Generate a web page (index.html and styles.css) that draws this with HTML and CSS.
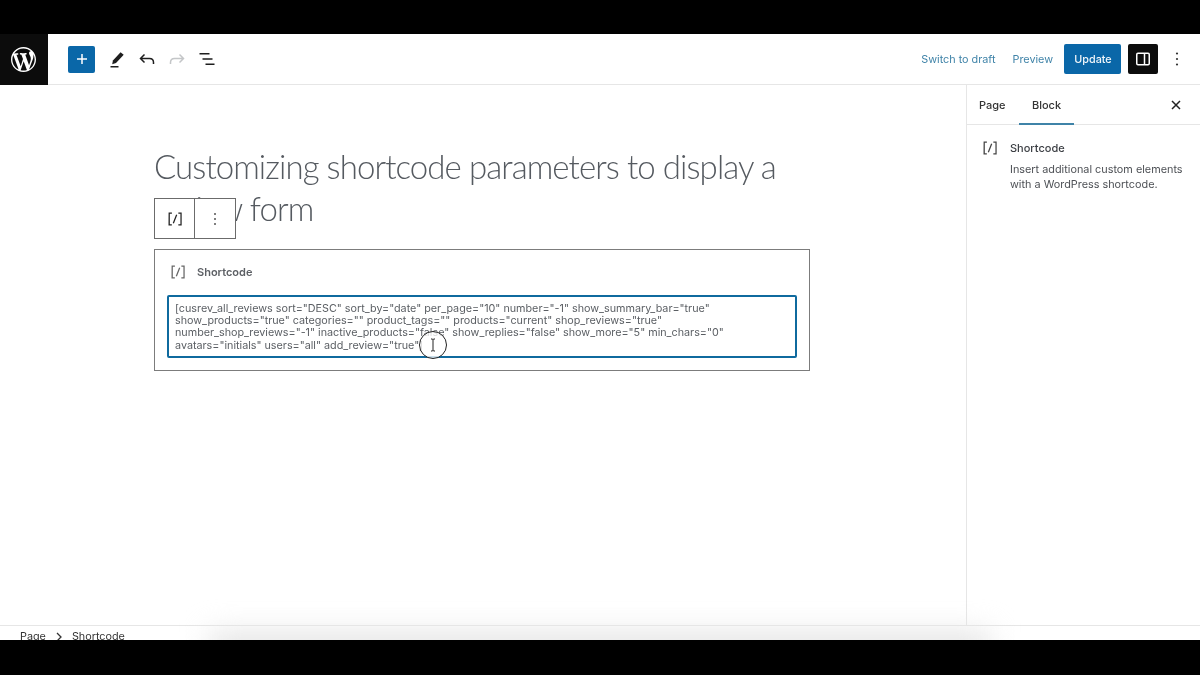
FILE: index.html
```html
<!DOCTYPE html>
<html lang="en">
<head>
<meta charset="utf-8">
<title>Edit Page</title>
<link rel="stylesheet" href="styles.css">
</head>
<body>
<div class="band-top"></div>
<div class="app">
  <header class="topbar">
    <div class="wp-logo">
      <svg width="25" height="25" viewBox="0 0 20 20"><path fill="#fff" fill-rule="evenodd" d="M20 10c0-5.51-4.49-10-10-10C4.48 0 0 4.49 0 10c0 5.52 4.48 10 10 10 5.51 0 10-4.48 10-10zM7.78 15.37L4.37 6.22c.55-.02 1.17-.08 1.17-.08.5-.06.44-1.13-.06-1.11 0 0-1.45.11-2.37.11-.18 0-.37 0-.58-.01C4.12 2.69 6.87 1.11 10 1.11c2.33 0 4.45.87 6.05 2.34-.68-.11-1.65.39-1.65 1.58 0 .74.45 1.36.9 2.1.35.61.55 1.36.55 2.46 0 1.49-1.4 5-1.4 5l-3.03-8.37c.54-.02.82-.17.82-.17.5-.05.44-1.25-.06-1.22 0 0-1.44.12-2.38.12-.87 0-2.33-.12-2.33-.12-.5-.03-.56 1.2-.06 1.22l.92.08 1.26 3.41zM17.41 10c.24-.64.74-1.87.43-4.25.7 1.29 1.05 2.71 1.05 4.25 0 3.29-1.73 6.24-4.4 7.78.97-2.59 1.94-5.2 2.92-7.78zM6.1 18.09C3.12 16.65 1.11 13.53 1.11 10c0-1.3.23-2.48.72-3.59C3.25 10.3 4.67 14.2 6.1 18.09zm4.03-6.63l2.58 6.98c-.86.29-1.76.45-2.71.45-.79 0-1.57-.11-2.29-.33.81-2.38 1.62-4.74 2.42-7.1z"/></svg>
    </div>
    <div class="tools">
      <button class="add-btn" aria-label="Add block"><svg width="14" height="14" viewBox="0 0 14 14"><path d="M7 2v10M2 7h10" stroke="#fff" stroke-width="1.5" fill="none"/></svg></button>
      <svg class="tool pencil" width="24" height="24" viewBox="0 0 24 24"><path fill="#1e1e1e" d="M15.6 5.3 18.7 7.8 11 16l-3.8 1.2.7-3.8z"/><path fill="#1e1e1e" d="M5.5 19h8v1.5h-8z"/></svg>
      <svg class="tool" width="24" height="24" viewBox="0 0 24 24"><path fill="none" stroke="#1e1e1e" stroke-width="1.5" d="M9.5 7.5 5.5 11.5l4 4M5.5 11.5h9c2.5 0 4 1.5 4 4v1.5"/></svg>
      <svg class="tool" width="24" height="24" viewBox="0 0 24 24"><path fill="none" stroke="#c4c6c8" stroke-width="1.5" d="M14.5 7.5l4 4-4 4M18.5 11.5h-9c-2.5 0-4 1.5-4 4v1.5"/></svg>
      <svg class="tool" width="24" height="24" viewBox="0 0 24 24"><path fill="#1e1e1e" d="M4.5 6h10v1.5h-10zM7.5 11.2h10v1.5h-10zM10.5 16.5h9V18h-9z"/></svg>
    </div>
    <div class="actions">
      <a class="link link-draft">Switch to draft</a>
      <a class="link link-preview">Preview</a>
      <button class="update">Update</button>
      <button class="panel-btn" aria-label="Settings"><svg width="16" height="16" viewBox="0 0 16 16"><rect x="1.75" y="2.25" width="12.5" height="11.5" rx="1.2" fill="none" stroke="#fff" stroke-width="1.5"/><path d="M9.5 2.5v11" stroke="#fff" stroke-width="1.5"/></svg></button>
      <svg class="kebab" width="4" height="16" viewBox="0 0 4 16"><circle cx="2" cy="2.5" r="1.1" fill="#333"/><circle cx="2" cy="8" r="1.1" fill="#333"/><circle cx="2" cy="13.5" r="1.1" fill="#333"/></svg>
    </div>
  </header>
  <div class="workspace">
    <main class="canvas">
      <h1 class="title">Customizing shortcode parameters to display a<br>review form</h1>
      <div class="block-toolbar">
        <div class="bt-cell bt-icon"><svg width="20" height="20" viewBox="0 0 24 24"><path fill="#222" d="M16 4.2v1.5h2.5v12.5H16v1.5h4V4.2h-4zM4.2 19.8h4v-1.5H5.8V5.8h2.5V4.2h-4l-.1 15.6zm5.1-3.1l1.4.6 4-10-1.4-.6-4 10z"/></svg></div>
        <div class="bt-cell bt-more"><svg width="4" height="14" viewBox="0 0 4 14"><circle cx="2" cy="2" r="1" fill="#555"/><circle cx="2" cy="7" r="1" fill="#555"/><circle cx="2" cy="12" r="1" fill="#555"/></svg></div>
      </div>
      <section class="sc-block">
        <div class="sc-label"><svg class="sc-glyph" width="20" height="20" viewBox="0 0 24 24"><path fill="#666" d="M16 4.2v1.5h2.5v12.5H16v1.5h4V4.2h-4zM4.2 19.8h4v-1.5H5.8V5.8h2.5V4.2h-4l-.1 15.6zm5.1-3.1l1.4.6 4-10-1.4-.6-4 10z"/></svg><span>Shortcode</span></div>
        <div class="sc-input">[cusrev_all_reviews sort="DESC" sort_by="date" per_page="10" number="-1" show_summary_bar="true"<br>show_products="true" categories="" product_tags="" products="current" shop_reviews="true"<br>number_shop_reviews="-1" inactive_products="false" show_replies="false" show_more="5" min_chars="0"<br>avatars="initials" users="all" add_review="true"]</div>
      </section>
      <div class="cursor">
        <svg width="10" height="14" viewBox="0 0 10 14"><path d="M3 1h1.5l.5.6.5-.6H7M5 1.5v11M3 13h1.5l.5-.6.5.6H7" fill="none" stroke="#222" stroke-width="1"/></svg>
      </div>
    </main>
    <aside class="sidebar">
      <div class="tabs">
        <div class="tab">Page</div>
        <div class="tab tab-active">Block</div>
        <svg class="close" width="12" height="12" viewBox="0 0 12 12"><path d="M2 2l8 8M10 2l-8 8" stroke="#222" stroke-width="1.5"/></svg>
      </div>
      <div class="card">
        <svg class="card-glyph" width="20" height="20" viewBox="0 0 24 24"><path fill="#444" d="M16 4.2v1.5h2.5v12.5H16v1.5h4V4.2h-4zM4.2 19.8h4v-1.5H5.8V5.8h2.5V4.2h-4l-.1 15.6zm5.1-3.1l1.4.6 4-10-1.4-.6-4 10z"/></svg>
        <div class="card-text">
          <div class="card-title">Shortcode</div>
          <p class="card-desc">Insert additional custom elements with a WordPress shortcode.</p>
        </div>
      </div>
    </aside>
  </div>
  <footer class="crumbs">
    <span>Page</span>
    <svg width="8" height="10" viewBox="0 0 8 10"><path d="M2 1l4 4-4 4" fill="none" stroke="#333" stroke-width="1.3"/></svg>
    <span>Shortcode</span>
    <div class="crumb-shade"></div>
  </footer>
</div>
<div class="band-bottom"></div>
</body>
</html>
```

FILE: styles.css
```css
* { box-sizing: border-box; }
html, body { margin: 0; padding: 0; }
body {
  width: 1200px;
  height: 675px;
  overflow: hidden;
  background: #000;
  font-family: Inter, "Liberation Sans", sans-serif;
  color: #3c3f44;
  display: flex;
  flex-direction: column;
}
.band-top { height: 34px; background: #000; flex: none; }
.band-bottom { height: 35px; background: #000; flex: none; }
.app {
  height: 606px;
  flex: none;
  background: #fff;
  display: flex;
  flex-direction: column;
  overflow: hidden;
  filter: blur(0.35px);
}

.topbar {
  height: 51px;
  flex: none;
  display: flex;
  align-items: center;
  border-bottom: 1px solid #e6e6e6;
}
.wp-logo {
  width: 48px;
  height: 51px;
  background: #0c0c0c;
  display: flex;
  align-items: center;
  justify-content: center;
  flex: none;
  padding-right: 1px;
}
.tools {
  display: flex;
  align-items: center;
  margin-left: 20px;
  gap: 6px;
}
.add-btn {
  width: 27px;
  height: 27px;
  padding: 0;
  border: 0;
  border-radius: 2px;
  background: #0a67a8;
  display: flex;
  align-items: center;
  justify-content: center;
  margin-right: 4px;
}
.actions {
  margin-left: auto;
  display: flex;
  align-items: center;
  padding-right: 21px;
}
.link { font-size: 10.8px; color: #3f83a8; padding-top: 1px; }
.link-draft { margin-right: 17px; }
.link-preview { margin-right: 11px; }
.update {
  width: 57px;
  height: 30px;
  border: 0;
  border-radius: 2px;
  background: #0a67a8;
  color: #f1f6fa;
  font: 500 10.8px Inter, "Liberation Sans", sans-serif;
  padding: 1px 0 0 1px;
  margin-right: 7px;
}
.panel-btn {
  width: 30px;
  height: 30px;
  border: 0;
  border-radius: 2px;
  background: #0c0c0c;
  padding: 0;
  display: flex;
  align-items: center;
  justify-content: center;
  margin-right: 17px;
}

.workspace { flex: 1; display: flex; min-height: 0; }
.canvas { flex: 1; position: relative; padding: 60px 0 0 154px; }
.title {
  margin: 0;
  width: 660px;
  font-family: Lato, "Open Sans", sans-serif;
  font-weight: 300;
  font-size: 33px;
  line-height: 42px;
  letter-spacing: -0.92px;
  color: #555a60;
}
.block-toolbar {
  position: absolute;
  left: 154px;
  top: 113px;
  width: 82px;
  height: 41px;
  display: flex;
  background: #fff;
  border: 1px solid #6b6b6b;
}
.bt-cell { display: flex; align-items: center; justify-content: center; }
.bt-icon { width: 40px; border-right: 1px solid #6b6b6b; }
.bt-more { flex: 1; }
.sc-block {
  margin-top: 20px;
  width: 656px;
  height: 122px;
  border: 1px solid #7c7c7c;
  padding: 12px;
}
.sc-label {
  display: flex;
  align-items: center;
  height: 20px;
  font-size: 11px;
  font-weight: 600;
  color: #5d6065;
}
.sc-glyph { margin: 0 9px 0 1px; flex: none; }
.sc-input {
  margin-top: 13px;
  height: 63px;
  border: 2px solid #0f6a9e;
  border-radius: 2px;
  padding: 5.5px 6px;
  font-size: 10.78px;
  line-height: 12.4px;
  color: #5a5e63;
  white-space: nowrap;
}
.cursor {
  position: absolute;
  left: 419px;
  top: 246px;
  width: 28px;
  height: 28px;
  border: 1.5px solid #222;
  border-radius: 50%;
  background: rgba(255,255,255,.78);
  display: flex;
  align-items: center;
  justify-content: center;
}

.sidebar { width: 234px; flex: none; border-left: 1px solid #e6e6e6; }
.tabs {
  height: 40px;
  display: flex;
  align-items: stretch;
  padding-left: 12px;
  border-bottom: 1px solid #e6e6e6;
  position: relative;
}
.tab {
  font-size: 11px;
  font-weight: 500;
  color: #333;
  line-height: 40px;
  width: 40px;
}
.tab-active {
  width: 55px;
  text-align: center;
  border-bottom: 2px solid #3f83a8;
  height: 40px;
}
.close { position: absolute; right: 18px; top: 14px; }
.card { display: flex; padding: 15px 12px 0 13px; }
.card-glyph { flex: none; margin-right: 10px; margin-top: -2px; }
.card-title { font-size: 11px; font-weight: 500; color: #3a3d42; line-height: 17px; }
.card-desc { margin: 5px 0 0; font-size: 10.85px; line-height: 15px; color: #4d5055; }

.crumbs {
  height: 15px;
  flex: none;
  position: relative;
  display: flex;
  align-items: flex-start;
  gap: 9px;
  padding: 4px 0 0 20px;
  border-top: 1px solid #e6e6e6;
  font-size: 10.8px;
  line-height: 13px;
  color: #333;
  margin-top: -1px;
}
.crumbs svg { margin-top: 2px; }
.crumb-shade {
  position: absolute;
  left: 210px;
  right: 210px;
  top: 6px;
  height: 30px;
  background: #e4e4e4;
  filter: blur(14px);
}
```
